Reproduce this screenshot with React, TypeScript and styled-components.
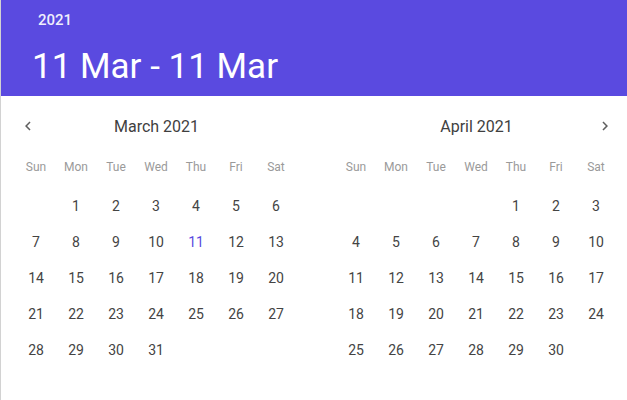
import React from 'react';
import styled, {createGlobalStyle} from "styled-components";

const GlobalStyle = createGlobalStyle`
    html, body {
        margin: 0;
        padding: 0;
        background: #ffffff;
        overflow: hidden;
    }

    body {
        font-family: Roboto, "Liberation Sans", Arial, sans-serif;
    }
`

const WEEKDAYS = ["Sun", "Mon", "Tue", "Wed", "Thu", "Fri", "Sat"];

type MonthData = {
    title: string
    offset: number
    days: number
    side: "left" | "right"
}

const MONTHS: MonthData[] = [
    {title: "March 2021", offset: 1, days: 31, side: "left"},
    {title: "April 2021", offset: 4, days: 30, side: "right"},
];

const SELECTED = {month: "March 2021", day: 11};

const ChevronLeft = () => (
    <svg width="18" height="18" viewBox="0 0 24 24">
        <path d="M15.41 7.41L14 6l-6 6 6 6 1.41-1.41L10.83 12z" fill="currentColor"/>
    </svg>
);

const ChevronRight = () => (
    <svg width="18" height="18" viewBox="0 0 24 24">
        <path d="M10 6L8.59 7.41 13.17 12l-4.58 4.59L10 18l6-6z" fill="currentColor"/>
    </svg>
);

const Month = ({month}: { month: MonthData }) => {
    const cells: (number | null)[] = [];
    for (let i = 0; i < month.offset; i++) cells.push(null);
    for (let d = 1; d <= month.days; d++) cells.push(d);

    return (
        <MonthBlock>
            <MonthHead>
                <ArrowButton side={month.side}>
                    {month.side === "left" ? <ChevronLeft/> : <ChevronRight/>}
                </ArrowButton>
                <MonthTitle>{month.title}</MonthTitle>
            </MonthHead>
            <WeekRow>
                {WEEKDAYS.map(w => <WeekDay key={w}>{w}</WeekDay>)}
            </WeekRow>
            <DaysGrid>
                {cells.map((d, i) => (
                    <Day key={i} $active={month.title === SELECTED.month && d === SELECTED.day}>
                        {d ?? ""}
                    </Day>
                ))}
            </DaysGrid>
        </MonthBlock>
    );
};

export default function App() {
    return (
        <>
            <GlobalStyle/>
            <Picker>
                <Toolbar>
                    <Year>2021</Year>
                    <Range>11 Mar - 11 Mar</Range>
                </Toolbar>
                <Months>
                    {MONTHS.map(m => <Month key={m.title} month={m}/>)}
                </Months>
            </Picker>
        </>
    );
}

const Picker = styled.div`
    width: 640px;
    height: 400px;
    border-left: 1px solid #d2d2d2;
    box-sizing: border-box;
`

const Toolbar = styled.div`
    height: 96px;
    background: #5a4ae0;
    color: #ffffff;
    padding-left: 31px;
    box-sizing: border-box;
`

const Year = styled.div`
    padding: 10px 0 0 6px;
    font-size: 15px;
    font-weight: 500;
    line-height: 20px;
    color: rgba(255, 255, 255, 0.92);
`

const Range = styled.div`
    margin-top: 17px;
    font-size: 35px;
    font-weight: 400;
    line-height: 40px;
`

const Months = styled.div`
    display: flex;
`

const MonthBlock = styled.div`
    width: 320px;
    padding: 0 24px 0 15px;
    box-sizing: border-box;
`

const MonthHead = styled.div`
    position: relative;
    margin-top: 14px;
    height: 32px;
    display: flex;
    align-items: center;
    justify-content: center;
    width: 281px;
`

const MonthTitle = styled.span`
    font-size: 16px;
    color: #3f3f3f;
`

const ArrowButton = styled.div<{ side: "left" | "right" }>`
    position: absolute;
    top: 4px;
    ${p => p.side === "left" ? "left: 0;" : "right: 0;"}
    width: 24px;
    height: 24px;
    display: flex;
    align-items: center;
    justify-content: center;
    color: #5f5f5f;
`

const WeekRow = styled.div`
    display: grid;
    grid-template-columns: repeat(7, 40px);
    margin-top: 13px;
    height: 24px;
    align-items: center;
`

const WeekDay = styled.span`
    text-align: center;
    font-size: 12px;
    color: #9a9a9a;
`

const DaysGrid = styled.div`
    display: grid;
    grid-template-columns: repeat(7, 40px);
    grid-auto-rows: 36px;
    margin-top: 9px;
    align-items: center;
`

const Day = styled.span<{ $active?: boolean }>`
    text-align: center;
    font-size: 14px;
    color: ${p => p.$active ? "#5a4ae0" : "#444444"};
`
